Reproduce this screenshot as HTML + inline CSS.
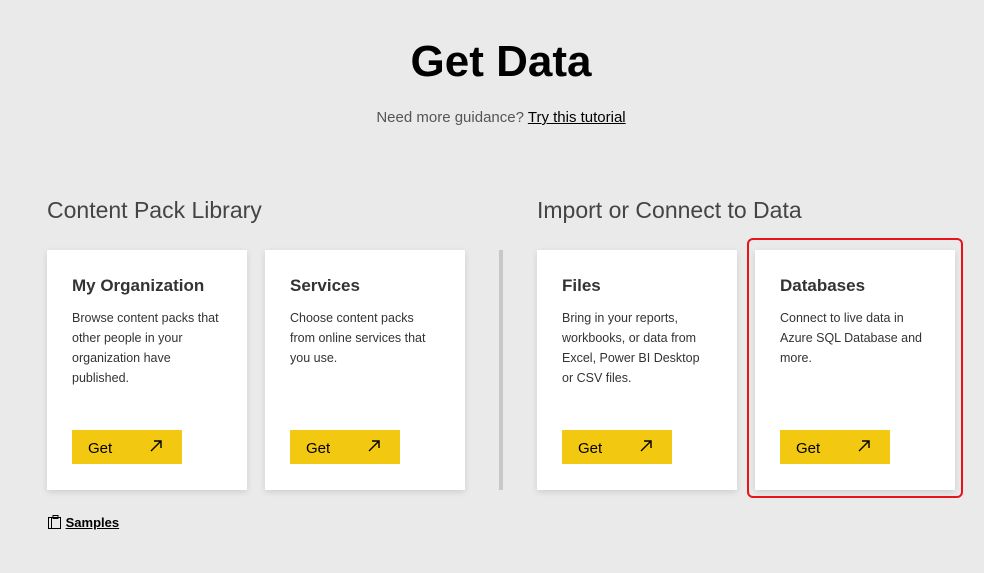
<!DOCTYPE html>
<html><head><style>
body{margin:0;width:984px;height:573px;background:#eaeaea;font-family:"Liberation Sans",sans-serif;position:relative;overflow:hidden;color:#333}
.abs{position:absolute}
h1{position:absolute;left:0;width:1002px;text-align:center;top:37px;margin:0;font-size:44px;font-weight:bold;color:#000}
.sub{left:0;width:1002px;text-align:center;top:109px;font-size:15px;color:#555}
.sub u{color:#000}
.h2{font-size:23px;color:#444;top:197px}
.card{position:absolute;top:250px;width:200px;height:240px;background:#fff;box-shadow:0 2px 6px rgba(0,0,0,.12)}
.card .t{position:absolute;left:25px;top:26px;font-size:17px;font-weight:bold;color:#333}
.card .d{position:absolute;left:25px;top:58px;width:152px;font-size:12.5px;line-height:20px;color:#333}
.btn{position:absolute;left:25px;top:180px;width:110px;height:34px;background:#f2c811;color:#000}
.btn span{position:absolute;left:16px;top:10px;font-size:15px}
.btn svg{position:absolute;left:77px;top:9px}
</style></head><body>
<h1>Get Data</h1>
<div class="abs sub">Need more guidance? <u>Try this tutorial</u></div>
<div class="abs h2" style="left:47px">Content Pack Library</div>
<div class="abs h2" style="left:537px">Import or Connect to Data</div>
<div class="abs" style="left:499px;top:250px;width:4px;height:240px;background:#c8c8c8"></div>
<div class="abs" style="left:747px;top:238px;width:212px;height:256px;border:2px solid #e8141b;border-radius:6px"></div>

<div class="card" style="left:47px"><div class="t">My Organization</div><div class="d">Browse content packs that other people in your organization have published.</div><div class="btn"><span>Get</span><svg width="14" height="14" viewBox="0 0 14 14"><path d="M2 12L12 2M5 2H12V9" stroke="#000" stroke-width="1.4" fill="none"/></svg></div></div>
<div class="card" style="left:265px"><div class="t">Services</div><div class="d">Choose content packs from online services that you use.</div><div class="btn"><span>Get</span><svg width="14" height="14" viewBox="0 0 14 14"><path d="M2 12L12 2M5 2H12V9" stroke="#000" stroke-width="1.4" fill="none"/></svg></div></div>
<div class="card" style="left:537px"><div class="t">Files</div><div class="d">Bring in your reports, workbooks, or data from Excel, Power BI Desktop or CSV files.</div><div class="btn"><span>Get</span><svg width="14" height="14" viewBox="0 0 14 14"><path d="M2 12L12 2M5 2H12V9" stroke="#000" stroke-width="1.4" fill="none"/></svg></div></div>
<div class="card" style="left:755px"><div class="t">Databases</div><div class="d">Connect to live data in Azure SQL Database and more.</div><div class="btn"><span>Get</span><svg width="14" height="14" viewBox="0 0 14 14"><path d="M2 12L12 2M5 2H12V9" stroke="#000" stroke-width="1.4" fill="none"/></svg></div></div>

<div class="abs" style="left:47px;top:514px;font-size:13px;font-weight:bold;color:#000">
<svg width="15" height="16" viewBox="0 0 15 16" style="vertical-align:-3px"><path d="M1.5 3.5h3v11h-3zM4.5 3.5h9v11h-9zM6 1.5h5v3H6z" stroke="#000" fill="none"/></svg>
<u>Samples</u></div>
</body></html>
